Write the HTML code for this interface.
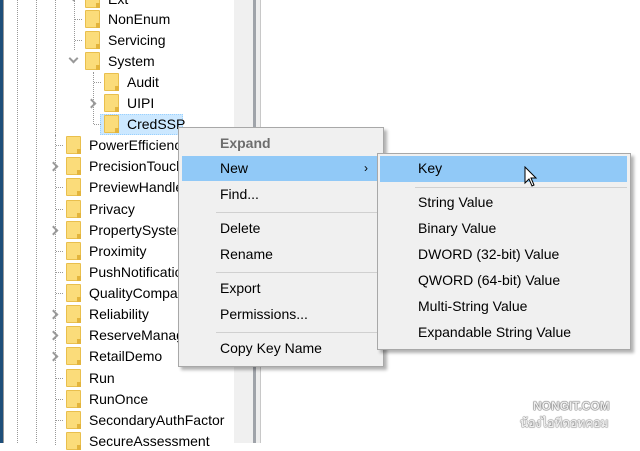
<!DOCTYPE html>
<html><head><style>
*{margin:0;padding:0;box-sizing:border-box}
body{width:640px;height:443px;overflow:hidden;background:#fff;font-family:"Liberation Sans",sans-serif;font-size:14px;color:#000;position:relative}
.a{position:absolute}
.row{position:absolute;height:20px;line-height:20px;white-space:nowrap}
.f{position:absolute;width:15px;height:18px;background:#fbdc7a;border:1px solid #e9bf4d;border-radius:1px}
.f:after{content:"";position:absolute;right:-1px;bottom:-1px;width:4px;height:5px;background:#e3b43c}
.chev{position:absolute;width:7px;height:7px;border-right:2px solid #999;border-bottom:2px solid #999}
.vd{position:absolute;width:0;border-left:1px dotted #999}
.hd{position:absolute;height:0;width:7px;border-top:1px dotted #999}
.menu{position:absolute;background:#f0f0f0;border:1px solid #a8a8a8;box-shadow:3px 3px 3px rgba(0,0,0,.3)}
.mi{position:absolute;height:20px;line-height:20px;white-space:nowrap}
.sep{position:absolute;height:1px;background:#d0d0d0}
.hl{position:absolute;background:#91c9f7}
</style></head><body>
<div class="a" style="left:0;top:0;width:3px;height:443px;background:#1e4f7a"></div>
<div class="a" style="left:3px;top:0;width:1px;height:443px;background:#9a9a9a"></div>
<div class="vd" style="left:17px;top:0;height:443px"></div>
<div class="vd" style="left:36px;top:0;height:443px"></div>
<div class="vd" style="left:55px;top:0;height:135px"></div>
<div class="vd" style="left:74px;top:0;height:50px"></div>
<div class="vd" style="left:93px;top:72px;height:52px"></div>
<div class="a" style="left:234px;top:0;width:19px;height:443px;background:#f0f0f0"></div>
<div class="a" style="left:253px;top:0;width:3px;height:443px;background:#a0a4aa"></div>
<div class="a" style="left:256px;top:0;width:4px;height:443px;background:#eeeeee"></div>
<div class="a" style="left:260px;top:0;width:1px;height:443px;background:#c8c8c8"></div>
<div class="a" style="left:100px;top:114px;width:83px;height:21px;background:#cce8ff;border:1px dotted #99d1ff"></div>

<div class="chev" style="left:70px;top:-7px;transform:rotate(-45deg)"></div>
<div class="f" style="left:85px;top:-10px"></div><div class="row" style="left:108px;top:-11px">Ext</div>
<div class="hd" style="left:75px;top:19px"></div><div class="f" style="left:85px;top:10px"></div><div class="row" style="left:108px;top:9px">NonEnum</div>
<div class="hd" style="left:75px;top:40px"></div><div class="f" style="left:85px;top:31px"></div><div class="row" style="left:108px;top:30px">Servicing</div>
<div class="chev" style="left:70px;top:55px;transform:rotate(45deg)"></div>
<div class="f" style="left:85px;top:52px"></div><div class="row" style="left:108px;top:51px">System</div>
<div class="hd" style="left:94px;top:82px"></div><div class="f" style="left:104px;top:73px"></div><div class="row" style="left:127px;top:72px">Audit</div>
<div class="chev" style="left:88px;top:100px;transform:rotate(-45deg)"></div>
<div class="f" style="left:104px;top:94px"></div><div class="row" style="left:127px;top:93px">UIPI</div>
<div class="hd" style="left:94px;top:124px"></div><div class="f" style="left:104px;top:115px"></div><div class="row" style="left:127px;top:114px">CredSSP</div>

<div class="hd" style="left:56px;top:145px"></div><div class="f" style="left:66px;top:136px"></div><div class="row" style="left:89px;top:135px">PowerEfficiency</div>
<div class="chev" style="left:50px;top:163px;transform:rotate(-45deg)"></div><div class="f" style="left:66px;top:157px"></div><div class="row" style="left:89px;top:156px">PrecisionTouch</div>
<div class="hd" style="left:56px;top:187px"></div><div class="f" style="left:66px;top:178px"></div><div class="row" style="left:89px;top:177px">PreviewHandle</div>
<div class="hd" style="left:56px;top:209px"></div><div class="f" style="left:66px;top:200px"></div><div class="row" style="left:89px;top:199px">Privacy</div>
<div class="chev" style="left:50px;top:227px;transform:rotate(-45deg)"></div><div class="f" style="left:66px;top:221px"></div><div class="row" style="left:89px;top:220px">PropertySystem</div>
<div class="hd" style="left:56px;top:251px"></div><div class="f" style="left:66px;top:242px"></div><div class="row" style="left:89px;top:241px">Proximity</div>
<div class="hd" style="left:56px;top:272px"></div><div class="f" style="left:66px;top:263px"></div><div class="row" style="left:89px;top:262px">PushNotifications</div>
<div class="hd" style="left:56px;top:293px"></div><div class="f" style="left:66px;top:284px"></div><div class="row" style="left:89px;top:283px">QualityCompat</div>
<div class="chev" style="left:50px;top:311px;transform:rotate(-45deg)"></div><div class="f" style="left:66px;top:305px"></div><div class="row" style="left:89px;top:304px">Reliability</div>
<div class="chev" style="left:50px;top:332px;transform:rotate(-45deg)"></div><div class="f" style="left:66px;top:326px"></div><div class="row" style="left:89px;top:325px">ReserveManager</div>
<div class="chev" style="left:50px;top:353px;transform:rotate(-45deg)"></div><div class="f" style="left:66px;top:347px"></div><div class="row" style="left:89px;top:346px">RetailDemo</div>
<div class="hd" style="left:56px;top:378px"></div><div class="f" style="left:66px;top:369px"></div><div class="row" style="left:89px;top:368px">Run</div>
<div class="hd" style="left:56px;top:399px"></div><div class="f" style="left:66px;top:390px"></div><div class="row" style="left:89px;top:389px">RunOnce</div>
<div class="hd" style="left:56px;top:420px"></div><div class="f" style="left:66px;top:411px"></div><div class="row" style="left:89px;top:410px">SecondaryAuthFactor</div>
<div class="f" style="left:66px;top:432px"></div><div class="row" style="left:89px;top:431px">SecureAssessment</div>
<div class="vd" style="left:55px;top:135px;height:310px"></div>
<div class="a" style="left:234px;top:135px;width:19px;height:308px;background:#f0f0f0"></div>

<div class="a" style="left:533px;top:399px;font-size:12px;font-weight:bold;color:#eee;text-shadow:0 0 1px #555,0 0 1px #555,0 0 1px #555">NONGIT.COM</div>
<div class="a" style="left:520px;top:414px;font-size:12px;font-weight:bold;color:#eee;text-shadow:0 0 1px #555,0 0 1px #555">น้องไอทีดอทคอม</div>

<div class="menu" style="left:178px;top:127px;width:206px;height:240px">
  <div class="mi" style="left:41px;top:5px;color:#6d6d6d;font-weight:bold">Expand</div>
  <div class="hl" style="left:3px;top:28px;width:198px;height:25px"></div>
  <div class="mi" style="left:41px;top:30px">New</div>
  <div class="mi" style="left:185px;top:30px;font-size:12px">›</div>
  <div class="mi" style="left:41px;top:56px">Find...</div>
  <div class="sep" style="left:37px;top:84px;width:166px"></div>
  <div class="mi" style="left:41px;top:90px">Delete</div>
  <div class="mi" style="left:41px;top:116px">Rename</div>
  <div class="sep" style="left:37px;top:144px;width:166px"></div>
  <div class="mi" style="left:41px;top:150px">Export</div>
  <div class="mi" style="left:41px;top:176px">Permissions...</div>
  <div class="sep" style="left:37px;top:204px;width:166px"></div>
  <div class="mi" style="left:41px;top:210px">Copy Key Name</div>
</div>
<div class="menu" style="left:377px;top:153px;width:254px;height:197px">
  <div class="hl" style="left:2px;top:2px;width:247px;height:26px"></div>
  <div class="mi" style="left:40px;top:4px">Key</div>
  <div class="sep" style="left:37px;top:33px;width:212px"></div>
  <div class="mi" style="left:40px;top:38px">String Value</div>
  <div class="mi" style="left:40px;top:64px">Binary Value</div>
  <div class="mi" style="left:40px;top:90px">DWORD (32-bit) Value</div>
  <div class="mi" style="left:40px;top:116px">QWORD (64-bit) Value</div>
  <div class="mi" style="left:40px;top:142px">Multi-String Value</div>
  <div class="mi" style="left:40px;top:168px">Expandable String Value</div>
</div>
<svg class="a" style="left:524px;top:166px" width="16" height="24" viewBox="0 0 16 24"><path d="M1 1 L1 17 L5 13 L8 20 L10 19 L7 12 L12 12 Z" fill="#fff" stroke="#000" stroke-width="1"/></svg>
</body></html>
